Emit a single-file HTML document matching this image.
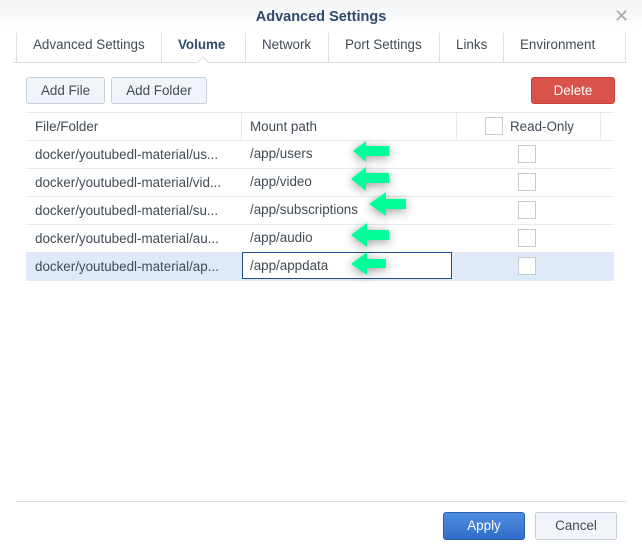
<!DOCTYPE html><html><head><style>
body{margin:0;width:642px;height:544px;background:#fff;font-family:"Liberation Sans",sans-serif;font-size:13.4px;color:#414b55;position:relative;overflow:hidden}
.a{position:absolute}
.hdr{left:0;top:0;width:642px;height:34px;background:linear-gradient(#f2f4f6,#fff)}
.title{left:0;width:642px;top:9px;text-align:center;font-weight:bold;color:#2e4a6d;font-size:14.5px}
.tab{top:37px;color:#414b55}
.sep{top:33px;width:1px;height:30px;background:#dde3ea}
.btn{top:77px;height:25px;border:1px solid #c6d0dc;border-radius:3px;background:#f1f5f9;text-align:center;line-height:25px}
.cell{height:27px;line-height:27px;border-bottom:1px solid #e6eaee}
.cb{width:16px;height:16px;border:1px solid #c6ccd3;background:#fff;left:518px}
</style></head><body>
<div class="a hdr"></div>
<div class="a title">Advanced Settings</div>
<div class="a" style="left:614px;top:6px;font-size:18px;color:#aaa">✕</div>
<div class="a sep" style="left:16px"></div>
<div class="a tab" style="left:33px">Advanced Settings</div>
<div class="a sep" style="left:161px"></div>
<div class="a tab" style="left:178px;font-weight:bold;color:#2e4a6d">Volume</div>
<div class="a sep" style="left:245px"></div>
<div class="a tab" style="left:262px">Network</div>
<div class="a sep" style="left:328px"></div>
<div class="a tab" style="left:345px">Port Settings</div>
<div class="a sep" style="left:439px"></div>
<div class="a tab" style="left:456px">Links</div>
<div class="a sep" style="left:503px"></div>
<div class="a tab" style="left:520px">Environment</div>
<div class="a sep" style="left:625px"></div>
<div class="a" style="left:13px;top:62px;width:614px;height:1px;background:#d7dee6"></div>
<div class="a" style="left:199px;top:58px;width:7px;height:7px;background:#fff;border-left:1px solid #d7dee6;border-top:1px solid #d7dee6;transform:rotate(45deg)"></div>
<div class="a btn" style="left:26px;width:77px">Add File</div>
<div class="a btn" style="left:111px;width:94px">Add Folder</div>
<div class="a btn" style="left:531px;width:82px;background:#d9534a;border-color:#c4443c;color:#fff">Delete</div>
<div class="a" style="left:26px;top:112px;width:588px;height:1px;background:#e6eaee"></div>
<div class="a" style="left:26px;top:113px;width:588px;height:166px">
<div class="cell" style="padding-left:9px">File/Folder</div>
<div class="cell" style="padding-left:9px">docker/youtubedl-material/us...</div>
<div class="cell" style="padding-left:9px">docker/youtubedl-material/vid...</div>
<div class="cell" style="padding-left:9px">docker/youtubedl-material/su...</div>
<div class="cell" style="padding-left:9px">docker/youtubedl-material/au...</div>
<div class="cell" style="padding-left:9px;background:#dfeaf8">docker/youtubedl-material/ap...</div>
</div>
<div class="a" style="left:241px;top:113px;width:1px;height:27px;background:#e6eaee"></div>
<div class="a" style="left:456px;top:113px;width:1px;height:27px;background:#e6eaee"></div>
<div class="a" style="left:600px;top:113px;width:1px;height:27px;background:#e6eaee"></div>
<div class="a" style="left:250px;top:113px;line-height:27px">Mount path</div>
<div class="a cb" style="left:485px;top:117px"></div>
<div class="a" style="left:510px;top:113px;line-height:27px">Read-Only</div>
<div class="a" style="left:250px;top:140px;line-height:27px">/app/users</div>
<div class="a" style="left:250px;top:168px;line-height:27px">/app/video</div>
<div class="a" style="left:250px;top:196px;line-height:27px">/app/subscriptions</div>
<div class="a" style="left:250px;top:224px;line-height:27px">/app/audio</div>
<div class="a" style="left:242px;top:252px;width:208px;height:25px;border:1px solid #1f4f8a;background:#fff"></div>
<div class="a" style="left:250px;top:252px;line-height:27px">/app/appdata</div>
<div class="a cb" style="top:145px"></div><div class="a cb" style="top:173px"></div><div class="a cb" style="top:201px"></div><div class="a cb" style="top:229px"></div><div class="a cb" style="top:257px"></div>
<svg class="a" style="left:0;top:0" width="642" height="544"><defs><filter id="s" x="-60%" y="-80%" width="220%" height="260%"><feDropShadow dx="0" dy="2" stdDeviation="5" flood-color="#000" flood-opacity="0.4"/></filter></defs>
<g fill="#00ff99" filter="url(#s)">
<path d="M353,151 L366,141 L366,146 L389,146 L389,156 L366,156 L366,162 Z"/>
<path d="M351,179 L366,167 L366,173 L389,173 L389,183 L366,183 L366,191 Z"/>
<path d="M369,204 L386,192 L386,199 L406,199 L406,209 L386,209 L386,216 Z"/>
<path d="M351,235 L367,223 L367,230 L389,230 L389,240 L367,240 L367,247 Z"/>
<path d="M351,264 L367,252 L367,259 L386,259 L386,268 L367,268 L367,275 Z"/>
</g></svg>
<div class="a" style="left:16px;top:501px;width:610px;height:1px;background:#d7dee6"></div>
<div class="a" style="left:443px;top:512px;width:80px;height:26px;border:1px solid #2d5fa8;border-radius:3px;background:linear-gradient(#4f8ee0,#2f6cc8);color:#fff;text-align:center;line-height:26px">Apply</div>
<div class="a" style="left:535px;top:512px;width:80px;height:26px;border:1px solid #c6d0dc;border-radius:3px;background:#f1f5f9;text-align:center;line-height:26px">Cancel</div>
</body></html>
